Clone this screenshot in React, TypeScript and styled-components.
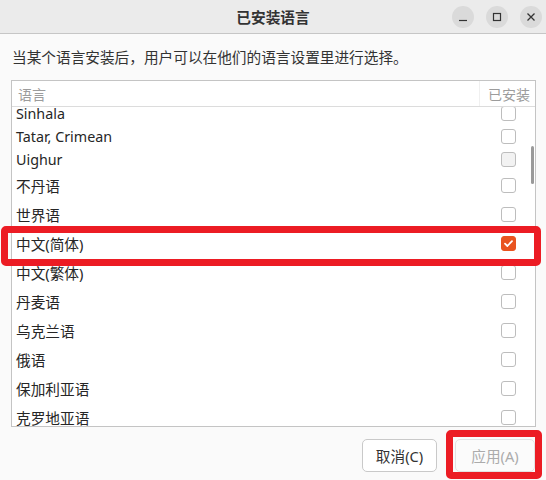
import React from "react";
import styled, { createGlobalStyle } from "styled-components";

// Styles globaux de la page
const GlobalStyle = createGlobalStyle`
  html, body {
    margin: 0;
    padding: 0;
    background: #fafafa;
  }
  body {
    font-family: "Noto Sans", "Noto Sans CJK SC", sans-serif;
    color: #2e2e2e;
  }
`;

interface Language {
  name: string;
  cjk: boolean;
  installed?: boolean;
  hover?: boolean;
}

const languages: Language[] = [
  { name: "Sinhala", cjk: false },
  { name: "Tatar, Crimean", cjk: false },
  { name: "Uighur", cjk: false, hover: true },
  { name: "不丹语", cjk: true },
  { name: "世界语", cjk: true },
  { name: "中文(简体)", cjk: true, installed: true },
  { name: "中文(繁体)", cjk: true },
  { name: "丹麦语", cjk: true },
  { name: "乌克兰语", cjk: true },
  { name: "俄语", cjk: true },
  { name: "保加利亚语", cjk: true },
  { name: "克罗地亚语", cjk: true },
  { name: "冰岛语", cjk: true },
];

// Fenêtre complète
const Window = styled.div`
  position: relative;
  width: 546px;
  height: 480px;
  display: flex;
  flex-direction: column;
  overflow: hidden;
  background: #fafafa;
`;

// Barre de titre
const TitleBar = styled.header`
  height: 33px;
  flex-shrink: 0;
  display: grid;
  grid-template-columns: 1fr auto 1fr;
  align-items: center;
  background: #ebebeb;
  border-bottom: 1px solid #c6c6c6;
`;

const Title = styled.h1`
  grid-column: 2;
  margin: 0;
  font-size: 14.67px;
  font-weight: 700;
  color: #333;
  line-height: 20px;
`;

const Controls = styled.div`
  grid-column: 3;
  justify-self: end;
  display: flex;
  gap: 12px;
  padding-right: 4px;
`;

const ControlButton = styled.button`
  width: 22px;
  height: 22px;
  border: none;
  border-radius: 50%;
  background: #dadada;
  padding: 0;
  display: flex;
  align-items: center;
  justify-content: center;
  color: #333;
`;

// Contenu
const Content = styled.main`
  flex: 1;
  display: flex;
  flex-direction: column;
  padding: 13px 10px 0 11px;
`;

const Description = styled.p`
  margin: 0 0 12px 1px;
  font-size: 14.67px;
  line-height: 21px;
  color: #333;
`;

// Liste des langues
const ListFrame = styled.section`
  height: 345px;
  border: 1px solid #c4c4c4;
  background: #fff;
  display: flex;
  flex-direction: column;
`;

const ListHeader = styled.div`
  height: 25px;
  flex-shrink: 0;
  display: flex;
  align-items: center;
  border-bottom: 1px solid #dcdcdc;
  font-size: 14px;
  color: #9c9c9c;
`;

const HeaderName = styled.div`
  flex: 1;
  padding-left: 6px;
`;

const HeaderInstalled = styled.div`
  height: 100%;
  display: flex;
  align-items: center;
  padding: 0 5px 0 8px;
  border-left: 1px solid #f0f0f0;
`;

const ListBody = styled.div`
  position: relative;
  flex: 1;
  overflow: hidden;
`;

const Rows = styled.ul`
  list-style: none;
  margin: -5px 0 0;
  padding: 0;
`;

const Row = styled.li<{ $cjk: boolean }>`
  height: ${({ $cjk }) => ($cjk ? "29px" : "23px")};
  display: flex;
  align-items: center;
  justify-content: space-between;
  padding: 0 19px 0 4px;
  font-size: ${({ $cjk }) => ($cjk ? "14.67px" : "14.3px")};
  color: #262626;
`;

const Checkbox = styled.span<{ $checked?: boolean; $hover?: boolean }>`
  width: 15px;
  height: 15px;
  box-sizing: border-box;
  border-radius: 3px;
  border: 1px solid ${({ $checked }) => ($checked ? "#e95420" : "#bdbdbd")};
  background: ${({ $checked, $hover }) =>
    $checked ? "#e95420" : $hover ? "#f2f2f2" : "#fff"};
  display: flex;
  align-items: center;
  justify-content: center;
`;

const Scrollbar = styled.div`
  position: absolute;
  right: 1px;
  top: 39px;
  width: 3px;
  height: 38px;
  border-radius: 2px;
  background: #9a9a9a;
`;

// Pied de fenêtre avec les boutons
const Footer = styled.footer`
  display: flex;
  justify-content: flex-end;
  gap: 18px;
  padding: 12px 1px 0 0;
`;

const ActionButton = styled.button<{ $disabled?: boolean; $width: number }>`
  width: ${({ $width }) => $width}px;
  height: 33px;
  border-radius: 5px;
  border: 1px solid ${({ $disabled }) => ($disabled ? "#e2e2e2" : "#c9c9c9")};
  background: ${({ $disabled }) => ($disabled ? "#fbfbfb" : "#ffffff")};
  color: ${({ $disabled }) => ($disabled ? "#ababab" : "#333")};
  font-family: inherit;
  font-size: 14.67px;
  padding: 0;
`;

// Cadres rouges d'annotation
const Highlight = styled.div<{
  $left: number;
  $top: number;
  $width: number;
  $height: number;
}>`
  position: absolute;
  left: ${({ $left }) => $left}px;
  top: ${({ $top }) => $top}px;
  width: ${({ $width }) => $width}px;
  height: ${({ $height }) => $height}px;
  box-sizing: border-box;
  border: 7px solid #ec1c24;
  border-radius: 5px;
  pointer-events: none;
`;

const CheckMark = () => (
  <svg width="11" height="11" viewBox="0 0 11 11">
    <path
      d="M2 5.6 L4.4 8 L9 3.2"
      fill="none"
      stroke="#fff"
      strokeWidth="1.8"
      strokeLinecap="round"
      strokeLinejoin="round"
    />
  </svg>
);

export default function App() {
  return (
    <>
      <GlobalStyle />
      <Window>
        <TitleBar>
          <Title>已安装语言</Title>
          <Controls>
            <ControlButton aria-label="最小化">
              <svg width="10" height="10" viewBox="0 0 10 10">
                <path d="M1 8.5 H9" stroke="#333" strokeWidth="1.2" />
              </svg>
            </ControlButton>
            <ControlButton aria-label="最大化">
              <svg width="10" height="10" viewBox="0 0 10 10">
                <rect
                  x="1.5"
                  y="1.5"
                  width="7"
                  height="7"
                  fill="none"
                  stroke="#333"
                  strokeWidth="1.2"
                />
              </svg>
            </ControlButton>
            <ControlButton aria-label="关闭">
              <svg width="10" height="10" viewBox="0 0 10 10">
                <path
                  d="M1.5 1.5 L8.5 8.5 M8.5 1.5 L1.5 8.5"
                  stroke="#333"
                  strokeWidth="1.3"
                />
              </svg>
            </ControlButton>
          </Controls>
        </TitleBar>

        <Content>
          <Description>
            当某个语言安装后，用户可以在他们的语言设置里进行选择。
          </Description>

          <ListFrame>
            <ListHeader>
              <HeaderName>语言</HeaderName>
              <HeaderInstalled>已安装</HeaderInstalled>
            </ListHeader>
            <ListBody>
              <Rows>
                {languages.map((lang) => (
                  <Row key={lang.name} $cjk={lang.cjk}>
                    <span>{lang.name}</span>
                    <Checkbox $checked={lang.installed} $hover={lang.hover}>
                      {lang.installed && <CheckMark />}
                    </Checkbox>
                  </Row>
                ))}
              </Rows>
              <Scrollbar />
            </ListBody>
          </ListFrame>

          <Footer>
            <ActionButton $width={75}>取消(C)</ActionButton>
            <ActionButton $width={80} $disabled>
              应用(A)
            </ActionButton>
          </Footer>
        </Content>

        <Highlight $left={1} $top={226} $width={540} $height={40} />
        <Highlight $left={446} $top={430} $width={96} $height={49} />
      </Window>
    </>
  );
}
